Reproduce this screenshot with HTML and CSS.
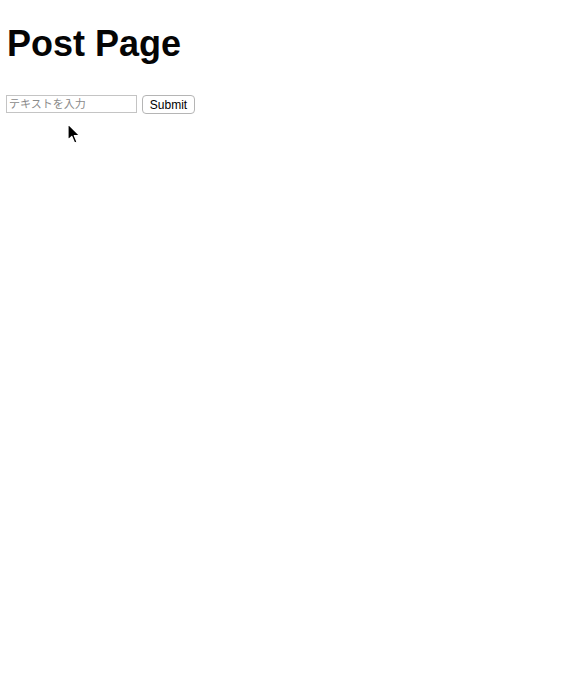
FILE: index.html
```html
<!DOCTYPE html>
<html lang="ja">
<head>
<meta charset="utf-8">
<title>Post Page</title>
<link rel="stylesheet" href="styles.css">
</head>
<body>
<div class="page">
  <h1 class="title">Post Page</h1>
  <form class="post-form">
    <input class="text-input" type="text" placeholder="テキストを入力">
    <button class="submit-btn" type="button">Submit</button>
  </form>
</div>
<svg class="cursor" width="14" height="22" viewBox="0 0 14 22" aria-hidden="true">
  <path d="M1 1 L1 17 L4.8 13.4 L7.6 20 L10 19 L7.3 12.6 L12.6 12.6 Z" fill="#000" stroke="#fff" stroke-width="1.2" stroke-linejoin="round"/>
</svg>
</body>
</html>
```
FILE: styles.css
```css
html, body {
  margin: 0;
  padding: 0;
  background: #fff;
}
.page {
  padding: 24px 6px 0 7px;
  font-family: "Liberation Sans", Arial, sans-serif;
  color: #000;
}
.title {
  margin: 0;
  font-size: 36px;
  line-height: 40px;
  font-weight: bold;
  letter-spacing: 0;
  color: #050505;
}
.post-form {
  display: flex;
  align-items: flex-start;
  margin: 31px 0 0 -1px;
}
.text-input {
  box-sizing: border-box;
  width: 131px;
  height: 18px;
  margin: 0;
  padding: 0 2px;
  border: 1px solid #c4c4c4;
  font-family: "Liberation Sans", "Noto Sans CJK JP", sans-serif;
  font-size: 11px;
  outline: none;
}
.text-input::placeholder {
  color: #8a8a8a;
}
.submit-btn {
  box-sizing: border-box;
  width: 53px;
  height: 19px;
  margin: 0 0 0 5px;
  padding: 1px 0 0 0;
  border: 1px solid #b5b5b5;
  border-radius: 4px;
  background: #fff;
  color: #000;
  font-family: "Liberation Sans", Arial, sans-serif;
  font-size: 12px;
  line-height: 16px;
}
.cursor {
  position: absolute;
  left: 67px;
  top: 123px;
}
```
